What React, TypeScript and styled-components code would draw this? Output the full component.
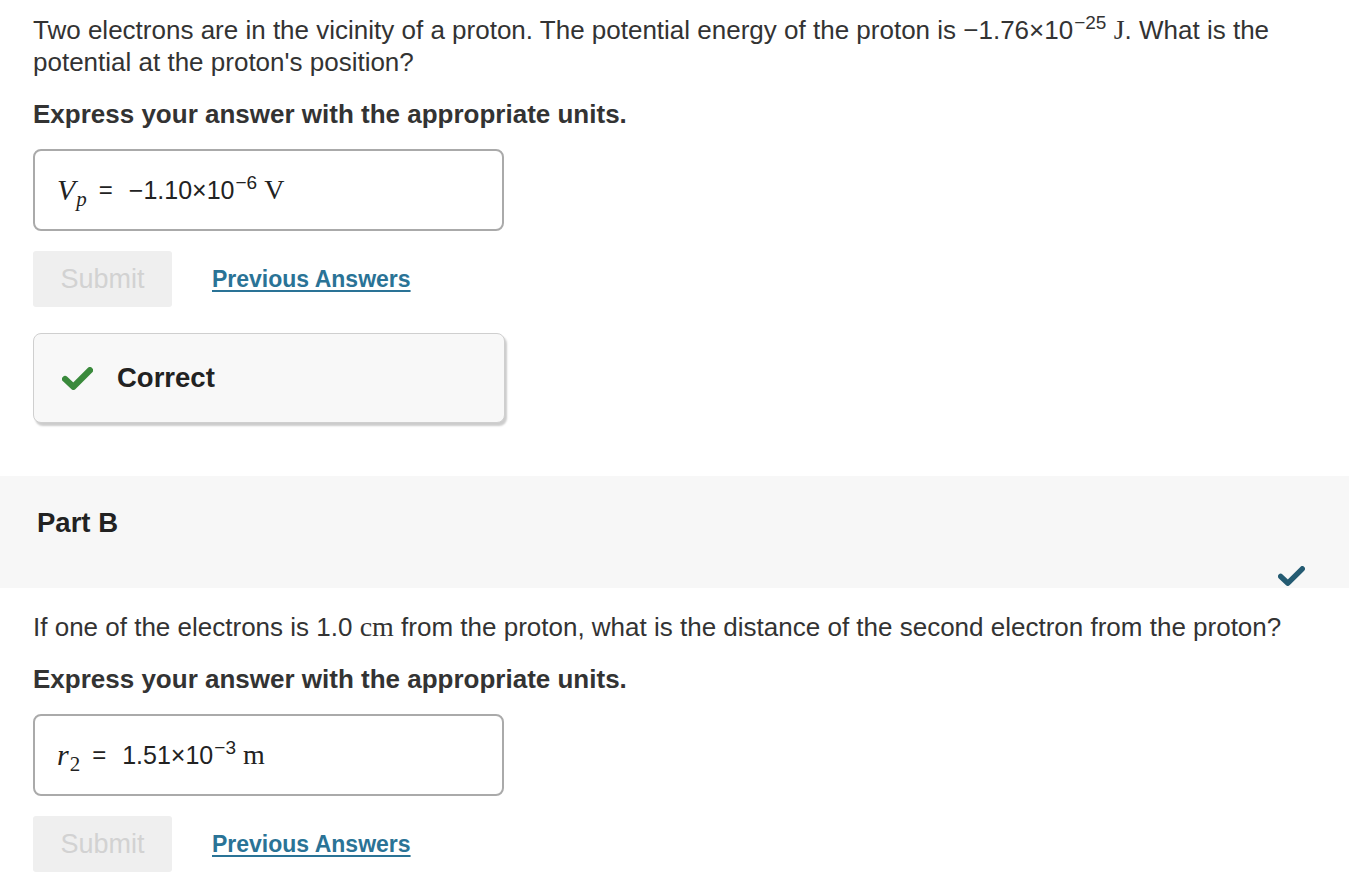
import React from "react";
import styled, { createGlobalStyle } from "styled-components";

const GlobalStyle = createGlobalStyle`
  body {
    margin: 0;
    background: #fff;
    font-family: "Liberation Sans", Arial, sans-serif;
    color: #333;
  }
`;

const Page = styled.div`
  width: 1370px;
  height: 884px;
  overflow: hidden;
  display: flex;
  flex-direction: column;
`;

const Section = styled.section`
  padding: 0 33px;
  display: flex;
  flex-direction: column;
  align-items: flex-start;
`;

const Prompt = styled.p<{ $top: number }>`
  margin: ${(p) => p.$top}px 0 0;
  font-size: 26px;
  line-height: 32px;
  color: #333;
  max-width: 1270px;
`;

const Instruction = styled.p`
  margin: 20px 0 0;
  font-size: 26px;
  line-height: 32px;
  font-weight: bold;
  color: #333;
`;

const Serif = styled.span`
  font-family: "Liberation Serif", "Times New Roman", serif;
  font-size: 28px;
`;

const Sup = styled.sup`
  font-size: 19px;
  line-height: 0;
  vertical-align: baseline;
  position: relative;
  top: -10px;
  margin-left: 1px;
`;

const AnswerBox = styled.div`
  box-sizing: border-box;
  width: 471px;
  height: 82px;
  margin-top: 19px;
  border: 2px solid #aaa;
  border-radius: 8px;
  display: flex;
  align-items: center;
  padding: 0 22px;
  font-size: 25px;
  color: #222;
  gap: 12px;
`;

const Variable = styled.span`
  font-family: "Liberation Serif", "Times New Roman", serif;
  font-style: italic;
  font-size: 30px;
  sub {
    font-size: 21px;
    line-height: 0;
    vertical-align: baseline;
    position: relative;
    top: 6px;
    margin-left: 1px;
  }
`;

const Equals = styled.span`
  font-size: 24px;
  margin-right: 4px;
`;

const Actions = styled.div`
  display: flex;
  align-items: center;
  gap: 40px;
  margin-top: 20px;
`;

const SubmitButton = styled.button`
  width: 139px;
  height: 56px;
  border: none;
  border-radius: 3px;
  background: #efefef;
  color: #d2d2d2;
  font-family: "Liberation Sans", Arial, sans-serif;
  font-size: 27px;
  padding: 0;
`;

const PrevLink = styled.a`
  font-size: 23px;
  font-weight: bold;
  color: #2a7396;
  text-decoration: underline;
  text-underline-offset: 3px;
  text-decoration-thickness: 2px;
`;

const Feedback = styled.div`
  box-sizing: border-box;
  width: 472px;
  height: 90px;
  margin-top: 26px;
  background: #f8f8f8;
  border: 1px solid #cfcfcf;
  border-radius: 8px;
  box-shadow: 2px 3px 2px rgba(0, 0, 0, 0.2);
  display: flex;
  align-items: center;
  padding-left: 28px;
  gap: 24px;
  font-size: 27.5px;
  font-weight: bold;
  color: #222;
`;

const PartHeader = styled.div`
  position: relative;
  margin-top: 53px;
  width: 1349px;
  height: 112px;
  background: #f7f7f7;
  display: flex;
  align-items: flex-start;
  padding: 31px 0 0 37px;
  box-sizing: border-box;
  font-size: 27.5px;
  line-height: 32px;
  font-weight: bold;
  color: #222;
`;

const DoneMark = styled.span`
  position: absolute;
  right: 44px;
  bottom: 2px;
  display: flex;
`;

const Check = ({ color, w, h }: { color: string; w: number; h: number }) => (
  <svg width={w} height={h} viewBox="0 0 30 22">
    <path
      d="M3 11.5 L11 19 L27 3"
      fill="none"
      stroke={color}
      strokeWidth="6"
      strokeLinecap="round"
      strokeLinejoin="round"
    />
  </svg>
);

export default function App() {
  return (
    <Page>
      <GlobalStyle />
      <Section>
        <Prompt $top={14}>
          Two electrons are in the vicinity of a proton. The potential energy of the proton is
          −1.76×10<Sup>−25</Sup> <Serif>J</Serif>. What is the potential at the proton's position?
        </Prompt>
        <Instruction>Express your answer with the appropriate units.</Instruction>
        <AnswerBox>
          <Variable>
            V<sub>p</sub>
          </Variable>
          <Equals>=</Equals>
          <span>
            −1.10×10<Sup>−6</Sup> <Serif>V</Serif>
          </span>
        </AnswerBox>
        <Actions>
          <SubmitButton disabled>Submit</SubmitButton>
          <PrevLink href="#">Previous Answers</PrevLink>
        </Actions>
        <Feedback>
          <Check color="#3a8a3c" w={31} h={23} />
          <span>Correct</span>
        </Feedback>
      </Section>
      <PartHeader>
        Part B
        <DoneMark>
          <Check color="#245b72" w={27} h={20} />
        </DoneMark>
      </PartHeader>
      <Section>
        <Prompt $top={23}>
          If one of the electrons is 1.0 <Serif>cm</Serif> from the proton, what is the distance of the
          second electron from the proton?
        </Prompt>
        <Instruction>Express your answer with the appropriate units.</Instruction>
        <AnswerBox>
          <Variable>
            r<sub style={{ fontStyle: "normal" }}>2</sub>
          </Variable>
          <Equals>=</Equals>
          <span>
            1.51×10<Sup>−3</Sup> <Serif>m</Serif>
          </span>
        </AnswerBox>
        <Actions>
          <SubmitButton disabled>Submit</SubmitButton>
          <PrevLink href="#">Previous Answers</PrevLink>
        </Actions>
      </Section>
    </Page>
  );
}
